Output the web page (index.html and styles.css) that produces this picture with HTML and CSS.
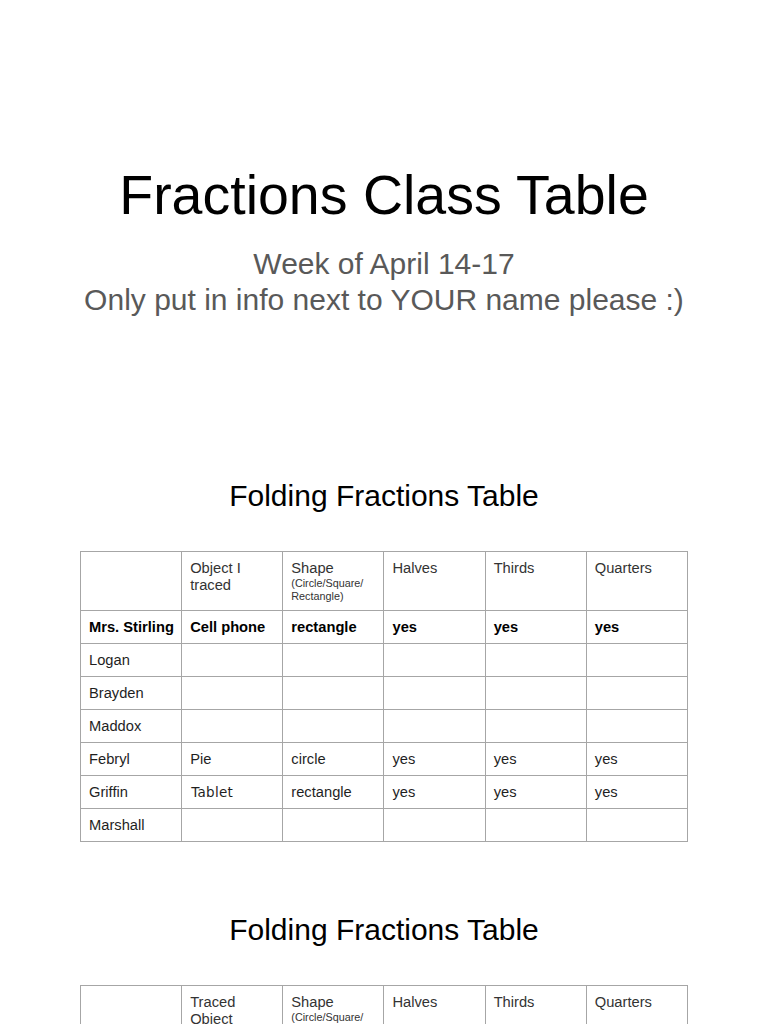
FILE: index.html
```html
<!DOCTYPE html>
<html lang="en">
<head>
<meta charset="utf-8">
<title>Fractions Class Table</title>
<link rel="stylesheet" href="styles.css">
</head>
<body>
<main class="page">
  <h1 class="title">Fractions Class Table</h1>
  <p class="subtitle">Week of April 14-17<br>Only put in info next to YOUR name please :)</p>

  <h2 class="section-title first">Folding Fractions Table</h2>
  <table class="grid">
    <colgroup><col><col><col><col><col><col></colgroup>
    <tr class="head">
      <td></td>
      <td>Object I traced</td>
      <td>Shape<span class="hint">(Circle/Square/<br>Rectangle)</span></td>
      <td>Halves</td>
      <td>Thirds</td>
      <td>Quarters</td>
    </tr>
    <tr class="strong">
      <td>Mrs. Stirling</td><td>Cell phone</td><td>rectangle</td><td>yes</td><td>yes</td><td>yes</td>
    </tr>
    <tr><td>Logan</td><td></td><td></td><td></td><td></td><td></td></tr>
    <tr><td>Brayden</td><td></td><td></td><td></td><td></td><td></td></tr>
    <tr><td>Maddox</td><td></td><td></td><td></td><td></td><td></td></tr>
    <tr><td>Febryl</td><td>Pie</td><td>circle</td><td>yes</td><td>yes</td><td>yes</td></tr>
    <tr><td>Griffin</td><td><span class="hand">Tablet</span></td><td>rectangle</td><td>yes</td><td>yes</td><td>yes</td></tr>
    <tr><td>Marshall</td><td></td><td></td><td></td><td></td><td></td></tr>
  </table>

  <h2 class="section-title second">Folding Fractions Table</h2>
  <table class="grid grid-second">
    <colgroup><col><col><col><col><col><col></colgroup>
    <tr class="head">
      <td></td>
      <td>Traced Object</td>
      <td>Shape<span class="hint">(Circle/Square/<br>Rectangle)</span></td>
      <td>Halves</td>
      <td>Thirds</td>
      <td>Quarters</td>
    </tr>
  </table>
</main>
</body>
</html>
```

FILE: styles.css
```css
html, body {
  margin: 0;
  padding: 0;
  background: #ffffff;
}

body {
  font-family: "Liberation Sans", Arial, sans-serif;
  color: #000000;
}

.page {
  width: 768px;
  display: flex;
  flex-direction: column;
  align-items: center;
}

.title {
  margin: 164px 0 0;
  font-size: 55.5px;
  line-height: 62px;
  font-weight: normal;
  color: #000000;
  text-align: center;
}

.subtitle {
  margin: 20px 0 0;
  font-size: 30px;
  line-height: 36px;
  color: #595959;
  text-align: center;
}

.section-title {
  margin: 0;
  font-size: 30px;
  line-height: 33px;
  font-weight: normal;
  color: #000000;
  text-align: center;
}

.section-title.first {
  margin-top: 161px;
}

.section-title.second {
  margin-top: 71px;
}

.grid {
  width: 608px;
  border-collapse: collapse;
  table-layout: fixed;
  margin-top: 39px;
}

.grid-second {
  margin-top: 39px;
}

.grid td {
  border: 1px solid #a6a6a6;
  padding: 8px 7px 7px 8px;
  font-size: 14.7px;
  line-height: 17px;
  vertical-align: top;
  color: #1f1f1f;
  height: 17px;
}

.grid .head td {
  color: #333333;
  height: 43px;
}

.grid .strong td {
  font-weight: bold;
  color: #000000;
}

.hint {
  display: block;
  font-size: 10.8px;
  line-height: 13px;
  margin-top: 0;
}

.hand {
  font-family: "DejaVu Sans", sans-serif;
  font-size: 13.5px;
  letter-spacing: 0.3px;
  padding-left: 1px;
}
```
